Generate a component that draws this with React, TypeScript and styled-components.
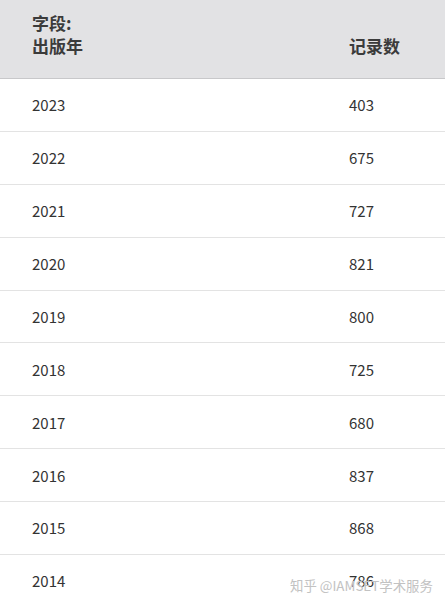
import React from "react";
import styled, { createGlobalStyle } from "styled-components";

const Global = createGlobalStyle`
  html, body { margin: 0; padding: 0; background: #ffffff; }
  body { font-family: "Noto Sans CJK SC", "Noto Sans", sans-serif; }
`;

const Page = styled.div`
  position: relative;
  width: 445px;
  height: 606px;
  overflow: hidden;
  background: #ffffff;
`;

const Table = styled.div`
  display: grid;
  grid-template-columns: 349px 1fr;
`;

const HeadCell = styled.div<{ $first?: boolean }>`
  box-sizing: border-box;
  height: 79px;
  display: flex;
  align-items: flex-end;
  padding: 0 0 21px ${(p) => (p.$first ? "32px" : "0")};
  background: #e2e2e4;
  border-bottom: 1px solid #c8c8ca;
  font-size: 17px;
  line-height: 23px;
  font-weight: 700;
  color: #3b3b3b;
  white-space: pre-line;
`;

const Cell = styled.div<{ $first?: boolean }>`
  box-sizing: border-box;
  height: 52.875px;
  display: flex;
  align-items: center;
  padding-left: ${(p) => (p.$first ? "32px" : "0")};
  border-bottom: 1px solid #e3e3e3;
  font-size: 15px;
  color: #333333;
`;

const Watermark = styled.div`
  position: absolute;
  left: 290px;
  top: 575px;
  font-size: 13.4px;
  line-height: 20px;
  color: #c2c2c2;
  white-space: nowrap;
  text-shadow: 0 0 1px rgba(255, 255, 255, 0.8);
`;

const rows: [string, string][] = [
  ["2023", "403"],
  ["2022", "675"],
  ["2021", "727"],
  ["2020", "821"],
  ["2019", "800"],
  ["2018", "725"],
  ["2017", "680"],
  ["2016", "837"],
  ["2015", "868"],
  ["2014", "786"],
];

export default function App() {
  return (
    <Page>
      <Global />
      <Table>
        <HeadCell $first>{"字段:\n出版年"}</HeadCell>
        <HeadCell>记录数</HeadCell>
        {rows.map(([y, n]) => (
          <React.Fragment key={y}>
            <Cell $first>{y}</Cell>
            <Cell>{n}</Cell>
          </React.Fragment>
        ))}
      </Table>
      <Watermark>知乎 @IAMSET学术服务</Watermark>
    </Page>
  );
}
